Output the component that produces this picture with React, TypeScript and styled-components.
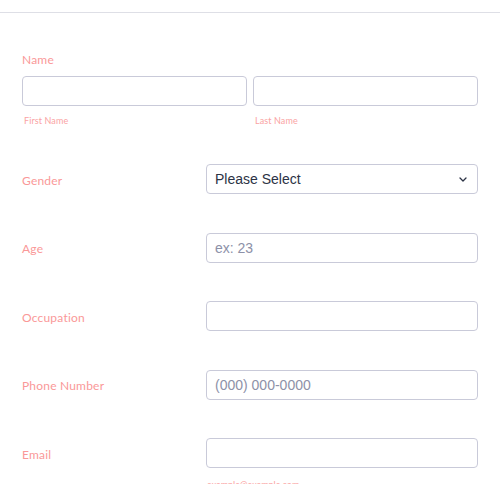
import React from 'react';
import styled, { createGlobalStyle } from 'styled-components';

const GlobalStyle = createGlobalStyle`
  body {
    margin: 0;
    background: #fff;
    font-family: 'Lato', 'Liberation Sans', sans-serif;
  }
`;

const TopRule = styled.div`
  height: 12px;
  border-bottom: 1px solid #dedfe6;
`;

const Form = styled.form`
  padding: 0 22px;
`;

const NameBlock = styled.div`
  padding-top: 40px;
`;

const Label = styled.label`
  display: block;
  color: #fa9898;
  font-size: 12px;
  line-height: 14px;
  font-weight: 400;
  letter-spacing: 0.2px;
`;

const NameInputs = styled.div`
  display: grid;
  grid-template-columns: 1fr 1fr;
  column-gap: 6px;
  margin-top: 9px;
`;

const SubLabel = styled.span`
  display: block;
  margin-top: 9px;
  padding-left: 2px;
  color: #faa3a3;
  font-size: 9px;
  line-height: 12px;
  letter-spacing: 0.1px;
`;

const Rows = styled.div`
  margin-top: 18px;
`;

const Row = styled.div`
  display: grid;
  grid-template-columns: 184px 1fr;
  align-items: center;
  padding: 19.25px 0;
`;

const RowLabel = styled(Label)`
  padding-top: 3px;
`;

const TextInput = styled.input`
  box-sizing: border-box;
  width: 100%;
  height: 30px;
  padding: 0 8px;
  border: 1px solid #c9cad9;
  border-radius: 4px;
  font-family: 'Liberation Sans', Arial, sans-serif;
  font-size: 14px;
  color: #2c3345;
  background: #fff;
  outline: none;
  &::placeholder {
    color: #8d91a8;
  }
`;

const SelectBox = styled.div`
  box-sizing: border-box;
  height: 30px;
  display: flex;
  align-items: center;
  justify-content: space-between;
  padding: 0 10px 0 8px;
  border: 1px solid #c9cad9;
  border-radius: 4px;
  font-family: 'Liberation Sans', Arial, sans-serif;
  font-size: 14px;
  color: #2c3345;
`;

const FieldWrap = styled.div`
  position: relative;
`;

const Hint = styled.span`
  position: absolute;
  left: 1px;
  top: 41px;
  color: #faa3a3;
  font-size: 9px;
  line-height: 12px;
`;

const Chevron = () => (
  <svg width="8" height="5" viewBox="0 0 8 5" fill="none">
    <path d="M1 1l3 3 3-3" stroke="#2c3345" strokeWidth="1.3" strokeLinecap="round" strokeLinejoin="round" />
  </svg>
);

const App = () => {
  return (
    <>
      <GlobalStyle />
      <TopRule />
      <Form>
        <NameBlock>
          <Label>Name</Label>
          <NameInputs>
            <div>
              <TextInput />
              <SubLabel>First Name</SubLabel>
            </div>
            <div>
              <TextInput />
              <SubLabel>Last Name</SubLabel>
            </div>
          </NameInputs>
        </NameBlock>
        <Rows>
          <Row>
            <RowLabel>Gender</RowLabel>
            <SelectBox>
              <span>Please Select</span>
              <Chevron />
            </SelectBox>
          </Row>
          <Row>
            <RowLabel>Age</RowLabel>
            <TextInput placeholder="ex: 23" />
          </Row>
          <Row>
            <RowLabel>Occupation</RowLabel>
            <TextInput />
          </Row>
          <Row>
            <RowLabel>Phone Number</RowLabel>
            <TextInput placeholder="(000) 000-0000" />
          </Row>
          <Row>
            <RowLabel>Email</RowLabel>
            <FieldWrap>
              <TextInput />
              <Hint>example@example.com</Hint>
            </FieldWrap>
          </Row>
        </Rows>
      </Form>
    </>
  );
};

export default App;
